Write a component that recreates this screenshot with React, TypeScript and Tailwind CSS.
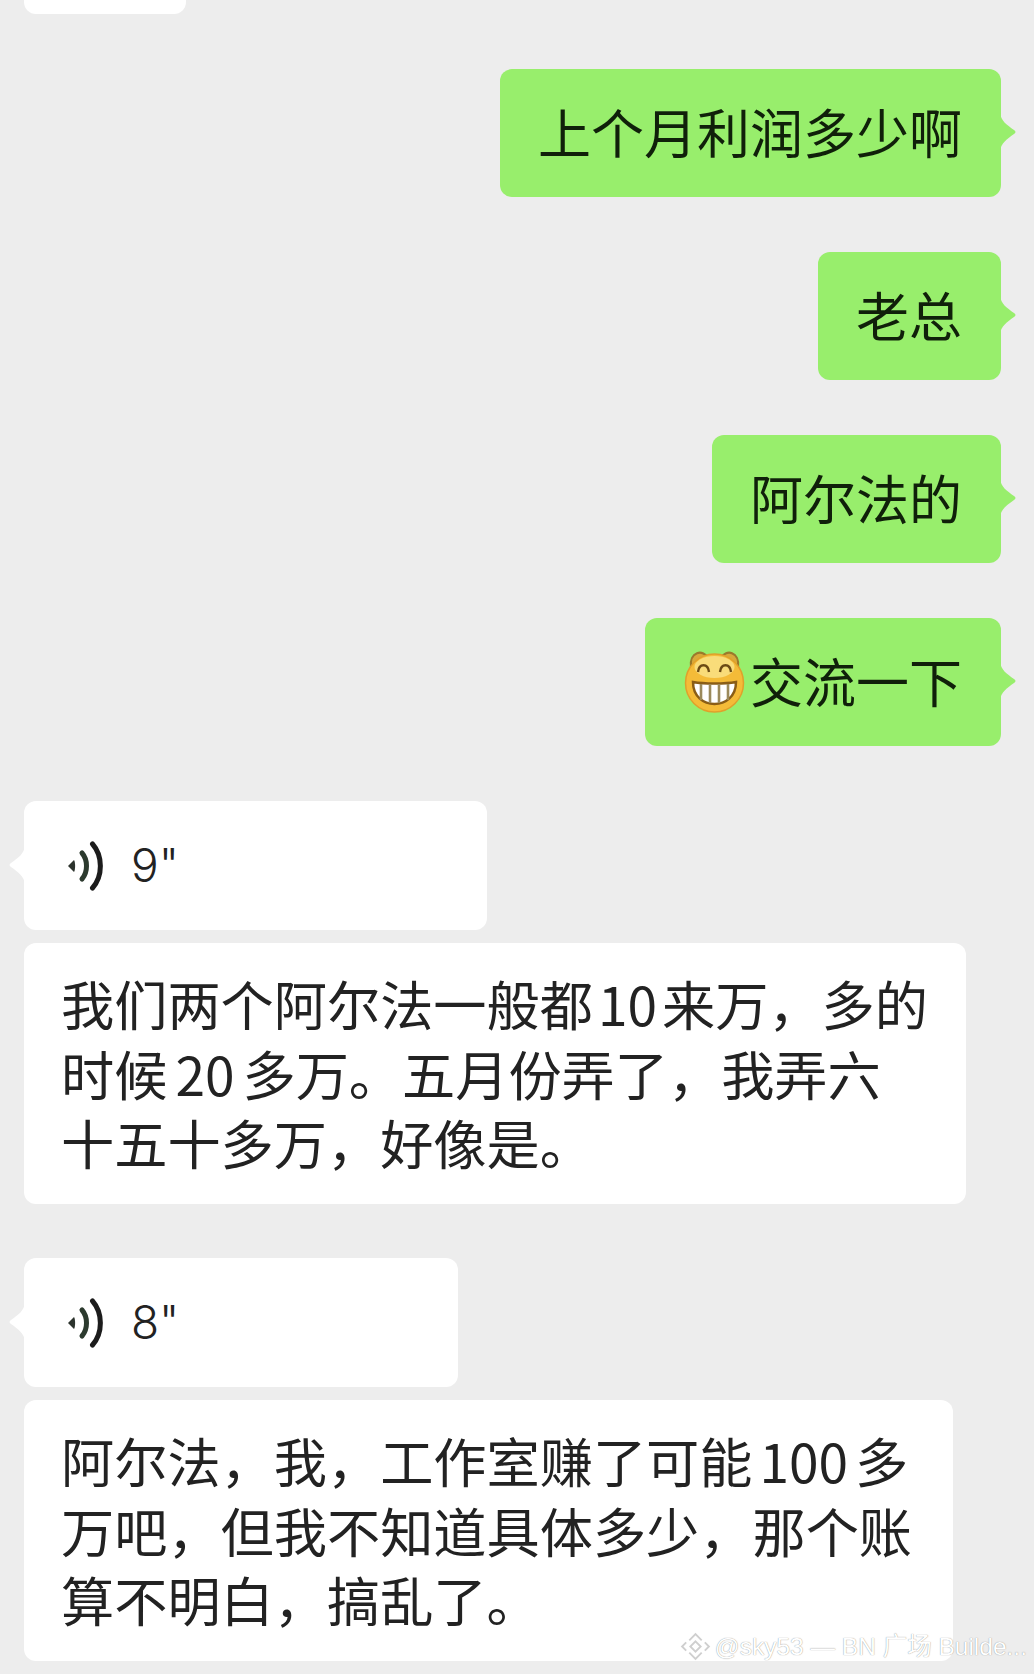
const FONT = "font-['Noto_Sans_CJK_SC','Noto_Sans',sans-serif]"

function GrinEmoji() {
  return (
    <svg width="63" height="66" viewBox="0 0 63 66" className="mr-[4px] shrink-0">
      <path d="M8 20 C6 5 20 1 26 12 Z M55 20 C57 5 43 1 37 12 Z" fill="#d9a93a" stroke="#9a7a2c" strokeWidth="2.200" />
      <circle cx="31.500" cy="36" r="29" fill="#f4bb38" stroke="#e0a02b" strokeWidth="1.500" />
      <ellipse cx="31.500" cy="20" rx="20" ry="11" fill="#f9dc7a" />
      <path d="M15 25 C16 16 25 16 26 25 M37 25 C38 16 47 16 48 25" fill="none" stroke="#6b4a14" strokeWidth="2.400" />
      <path d="M10 35 C21 37 42 37 53 35 C53 50 42 57 31.500 57 C21 57 10 50 10 35 Z" fill="#fff" stroke="#8a5d16" strokeWidth="2.500" />
      <path d="M18 37 V53 M27 37 V56 M36 37 V56 M45 37 V53" stroke="#9b8a5c" strokeWidth="2.600" />
    </svg>
  )
}

function VoiceIcon() {
  return (
    <svg width="36" height="50" viewBox="0 0 36 50" className="shrink-0">
      <path d="M1 25 L7 19 C8.500 21 8.500 29 7 31 Z" fill="#2c332d" />
      <path d="M15 12 C21 19 21 31 15 38" fill="none" stroke="#2c3a2e" strokeWidth="5" strokeLinecap="round" />
      <path d="M25.500 3 C36 15 36 35 25.500 47" fill="none" stroke="#1c1c1c" strokeWidth="5" strokeLinecap="round" />
    </svg>
  )
}

function Tail({ side }: { side: 'left' | 'right' }) {
  return side === 'right' ? (
    <svg width="17" height="38" viewBox="0 0 17 38" className="absolute right-[-16px] top-[44px]">
      <path d="M0 0 C1 8 7 12 14 17 Q17 19 14 21 C7 26 1 30 0 38 Z" fill="#98ee6c" />
    </svg>
  ) : (
    <svg width="17" height="38" viewBox="0 0 17 38" className="absolute left-[-16px] top-[45px]">
      <path d="M17 0 C16 8 10 12 3 17 Q0 19 3 21 C10 26 16 30 17 38 Z" fill="#ffffff" />
    </svg>
  )
}

function Sent({ children }: { children: React.ReactNode }) {
  return (
    <div className="relative flex h-[128px] items-center self-end rounded-[12px] bg-[#98ee6c] pb-[4px] pl-[38px] pr-[39px] text-[53px] leading-[70px] text-[#10200a]">
      {children}
      <Tail side="right" />
    </div>
  )
}

function Voice({ secs, width }: { secs: string; width: string }) {
  return (
    <div className={`relative flex h-[129px] items-center rounded-[12px] bg-white pl-[43px] text-[#222] ${width}`}>
      <Tail side="left" />
      <VoiceIcon />
      <span className="ml-[28px] font-['Inter',sans-serif] text-[46px] font-light">{secs}</span>
    </div>
  )
}

function Transcript({ lines, width }: { lines: string[]; width: string }) {
  return (
    <div className={`mt-[13px] h-[261px] rounded-[12px] bg-white pl-[37px] pt-[25px] text-[53.200px] leading-[69.500px] text-[#222] ${width}`}>
      {lines.map((line) => (
        <div key={line} className="whitespace-nowrap">
          {line.split(/(\d+)/).map((part, i) =>
            /\d/.test(part) ? (
              <span key={i} className={part === '10' ? 'mx-[5px]' : part === '20' ? 'mx-[8px]' : 'mx-[7px]'}>
                {part}
              </span>
            ) : (
              part
            ),
          )}
        </div>
      ))}
    </div>
  )
}

export default function App() {
  return (
    <div className={`relative flex h-[1674px] w-[1034px] flex-col overflow-hidden bg-[#ededed] px-[24px] ${FONT}`}>
      <div className="h-[14px] w-[162px] rounded-b-[12px] bg-white" />

      <div className="mr-[9px] mt-[55px] flex flex-col gap-[55px]">
        <Sent>上个月利润多少啊</Sent>
        <Sent>老总</Sent>
        <Sent>阿尔法的</Sent>
        <Sent>
          <GrinEmoji />
          交流一下
        </Sent>
      </div>

      <div className="mt-[55px]">
        <Voice secs={'9"'} width="w-[463px]" />
      </div>
      <Transcript
        width="w-[942px]"
        lines={['我们两个阿尔法一般都10来万，多的', '时候20多万。五月份弄了，我弄六', '十五十多万，好像是。']}
      />

      <div className="mt-[54px]">
        <Voice secs={'8"'} width="w-[434px]" />
      </div>
      <Transcript
        width="w-[929px]"
        lines={['阿尔法，我，工作室赚了可能100多', '万吧，但我不知道具体多少，那个账', '算不明白，搞乱了。']}
      />

      <div className="absolute bottom-[12px] right-[7px] flex items-center gap-[4px] text-[24.500px] leading-[30px] text-white [text-shadow:0_0_1px_#777777]">
        <svg width="31" height="31" viewBox="0 0 30 30" fill="none" stroke="#cfcfcf" strokeWidth="1.800">
          <path d="M15 10 L20 15 L15 20 L10 15 Z M9 9 L15 3 L21 9 M9 21 L15 27 L21 21 M6 11 L2 15 L6 19 M24 11 L28 15 L24 19" />
        </svg>
        <span className="font-['Liberation_Sans','Noto_Sans_CJK_SC',sans-serif]">@sky53 — BN 广场 Builde...</span>
      </div>
    </div>
  )
}
